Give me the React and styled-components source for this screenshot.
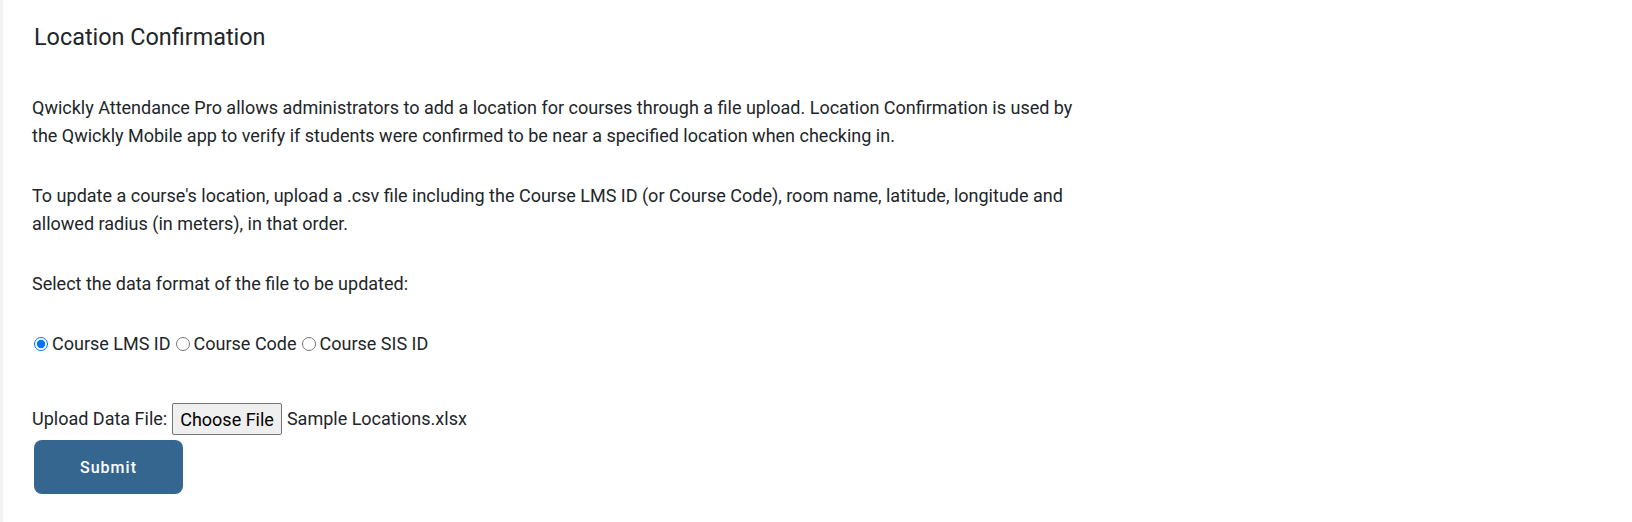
import React from 'react';
import styled, {createGlobalStyle} from 'styled-components';

const GlobalStyle = createGlobalStyle`
  body {
    margin: 0;
    background: #fff;
    font-family: Roboto, "Liberation Sans", sans-serif;
    color: #212529;
  }
`

export default function App() {
  return (
    <>
      <GlobalStyle/>
      <Page>
        <Title>Location Confirmation</Title>
        <Text>
          Qwickly Attendance Pro allows administrators to add a location for courses through a file upload. Location Confirmation is used by the Qwickly Mobile app to verify if students were confirmed to be near a specified location when checking in.
        </Text>
        <Text>
          To update a course's location, upload a .csv file including the Course LMS ID (or Course Code), room name, latitude, longitude and allowed radius (in meters), in that order.
        </Text>
        <Text>Select the data format of the file to be updated:</Text>
        <RadioRow>
          <RadioLabel><Radio type="radio" name="format" defaultChecked/>Course LMS ID</RadioLabel>
          <RadioLabel><Radio type="radio" name="format"/>Course Code</RadioLabel>
          <RadioLabel><Radio type="radio" name="format"/>Course SIS ID</RadioLabel>
        </RadioRow>
        <UploadRow>
          <span>Upload Data File:</span>
          <ChooseButton type="button">Choose File</ChooseButton>
          <span>Sample Locations.xlsx</span>
        </UploadRow>
        <SubmitButton type="button">Submit</SubmitButton>
      </Page>
    </>
  )
}

const Page = styled.div`
  min-height: 522px;
  box-sizing: border-box;
  border-left: 3px solid #f3f3f3;
  padding: 23px 0 0 29px;
  display: flex;
  flex-direction: column;
  align-items: flex-start;
`
const Title = styled.h2`
  margin: 0 0 43px 2px;
  font-size: 23.4px;
  font-weight: 400;
  line-height: 28px;
  color: #212529;
`
const Text = styled.p`
  margin: 0 0 32px;
  max-width: 1050px;
  font-size: 18px;
  line-height: 28px;
`
const RadioRow = styled.div`
  display: flex;
  align-items: center;
  gap: 3px;
  font-size: 18px;
  line-height: 28px;
`
const RadioLabel = styled.label`
  display: flex;
  align-items: center;
`
const Radio = styled.input`
  width: 14px;
  height: 14px;
  margin: 0 4px 0 2px;
`
const UploadRow = styled.div`
  display: flex;
  align-items: center;
  gap: 5px;
  margin-top: 45px;
  font-size: 18px;
  line-height: 28px;
`
const ChooseButton = styled.button`
  height: 32px;
  padding: 0 7px;
  font-family: inherit;
  font-size: 18px;
  color: #000;
  background: #efefef;
  border: 1px solid #767676;
  border-radius: 2px;
`
const SubmitButton = styled.button`
  margin-top: 5px;
  margin-left: 2px;
  width: 149px;
  height: 54px;
  border: none;
  border-radius: 8px;
  background: #35668f;
  color: #fff;
  font-family: inherit;
  font-size: 16px;
  font-weight: 500;
  letter-spacing: 1px;
`
